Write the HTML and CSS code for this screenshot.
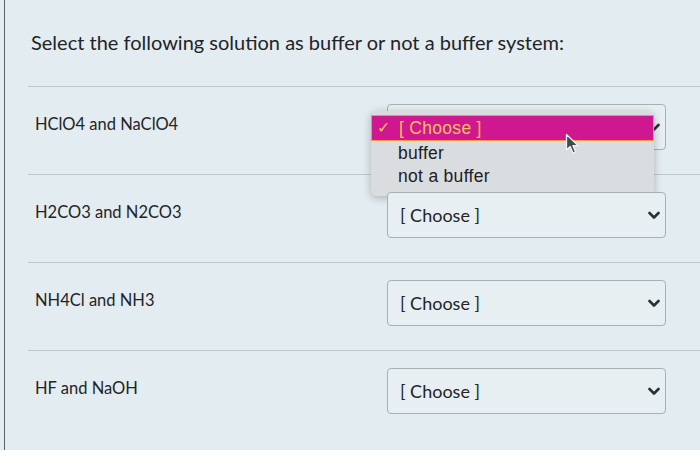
FILE: index.html
```html
<!DOCTYPE html>
<html lang="en">
<head>
    <meta charset="UTF-8">
    <meta name="viewport" content="width=device-width, initial-scale=1.0">
    <title>Buffer or not a buffer</title>
    <link rel="stylesheet" href="styles.css">
</head>
<body>
    <div class="page">
        <p class="question">Select the following solution as buffer or not a buffer system:</p>

        <div class="answers">
            <div class="answer-row">
                <span class="answer-label">HClO4 and NaClO4</span>
                <div class="select-wrap">
                    <div class="select is-open">
                        <span class="select-value">[ Choose ]</span>
                        <svg class="chevron" width="12" height="9" viewBox="0 0 12 9"><path d="M1.5 2 L6 6.5 L10.5 2" fill="none" stroke="#2b3033" stroke-width="2.6" stroke-linecap="round" stroke-linejoin="round"/></svg>
                    </div>

                    <!-- open dropdown over the first select -->
                    <ul class="menu">
                        <li class="menu-item selected"><span class="check">✓</span><span>[ Choose ]</span></li>
                        <li class="menu-item">buffer</li>
                        <li class="menu-item">not a buffer</li>
                    </ul>
                    <svg class="cursor" width="16" height="22" viewBox="0 0 16 22"><path d="M1.5 1.5 L1.5 17 L5.2 13.6 L8 20 L10.6 18.9 L7.9 12.6 L13 12.6 Z" fill="#3f4a4c" stroke="#f1f3f4" stroke-width="1.3" stroke-linejoin="round"/></svg>
                </div>
            </div>

            <div class="answer-row">
                <span class="answer-label">H2CO3 and N2CO3</span>
                <div class="select-wrap">
                    <div class="select">
                        <span class="select-value">[ Choose ]</span>
                        <svg class="chevron" width="12" height="9" viewBox="0 0 12 9"><path d="M1.5 2 L6 6.5 L10.5 2" fill="none" stroke="#2b3033" stroke-width="2.6" stroke-linecap="round" stroke-linejoin="round"/></svg>
                    </div>
                </div>
            </div>

            <div class="answer-row">
                <span class="answer-label">NH4Cl and NH3</span>
                <div class="select-wrap">
                    <div class="select">
                        <span class="select-value">[ Choose ]</span>
                        <svg class="chevron" width="12" height="9" viewBox="0 0 12 9"><path d="M1.5 2 L6 6.5 L10.5 2" fill="none" stroke="#2b3033" stroke-width="2.6" stroke-linecap="round" stroke-linejoin="round"/></svg>
                    </div>
                </div>
            </div>

            <div class="answer-row">
                <span class="answer-label">HF and NaOH</span>
                <div class="select-wrap">
                    <div class="select">
                        <span class="select-value">[ Choose ]</span>
                        <svg class="chevron" width="12" height="9" viewBox="0 0 12 9"><path d="M1.5 2 L6 6.5 L10.5 2" fill="none" stroke="#2b3033" stroke-width="2.6" stroke-linecap="round" stroke-linejoin="round"/></svg>
                    </div>
                </div>
            </div>
        </div>
    </div>
</body>
</html>
```

FILE: styles.css
```css
body {
    margin: 0;
    background-color: #e3ecf0;
    font-family: 'Lato', sans-serif;
    color: #1f2427;
}

.page {
    margin-left: 4px;
    border-left: 1px solid #59636a;
    height: 450px;
    padding-left: 23px;
    overflow: hidden;
}

.question {
    margin: 0;
    padding: 30px 0 0 3px;
    height: 56px;
    font-size: 20px;
    line-height: 24px;
}

.answer-row {
    display: grid;
    grid-template-columns: 359px 279px;
    height: 87px;
    border-top: 1px solid #bfc8cc;
}

.answer-label {
    padding: 27px 0 0 7px;
    font-size: 16.5px;
    line-height: 20px;
}

.select-wrap {
    position: relative;
    margin-top: 17px;
}

.select {
    display: flex;
    align-items: center;
    justify-content: space-between;
    height: 44px;
    padding: 0 5px 0 12px;
    border: 1px solid #a7b0b4;
    border-radius: 4px;
    background-color: #e7eff3;
    font-size: 18px;
}

/* value is hidden behind the open menu */
.select.is-open .select-value {
    visibility: hidden;
}

.menu {
    position: absolute;
    top: 7px;
    left: -16px;
    width: 283px;
    margin: 0;
    padding: 4px 0 8px 0;
    list-style: none;
    background-color: #d9dde0;
    border-radius: 6px;
    box-shadow: 0 2px 8px rgba(0, 0, 0, 0.25);
    font-family: 'Liberation Sans', sans-serif;
    font-size: 17.5px;
    letter-spacing: 0.3px;
    color: #1d2022;
}

.menu-item {
    height: 23px;
    line-height: 23px;
    padding-left: 27px;
}

.menu-item.selected {
    display: flex;
    height: 24px;
    line-height: 24px;
    padding-left: 5px;
    background-color: #cf188f;
    border: 1px solid #f29a3c;
    color: #f7c05a;
    margin-bottom: 1px;
}

.check {
    width: 22px;
    font-size: 16px;
}

.cursor {
    position: absolute;
    left: 178px;
    top: 29px;
}
```
